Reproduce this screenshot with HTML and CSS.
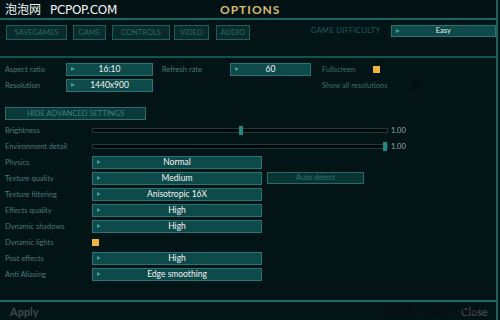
FILE: index.html
```html
<!DOCTYPE html>
<html lang="en">
<head>
    <meta charset="UTF-8">
    <title>Options</title>
    <link rel="stylesheet" href="styles.css">
</head>
<body>
    <div class="screen">
        <div class="topbar">
            <span class="brand">泡泡网<b>PCPOP.COM</b></span>
            <span class="title">OPTIONS</span>
        </div>
        <div class="tabs-row">
            <div class="tabs">
                <a class="tab">SAVEGAMES</a>
                <a class="tab tab-game">GAME</a>
                <a class="tab tab-controls">CONTROLS</a>
                <a class="tab tab-video">VIDEO</a>
                <a class="tab tab-audio">AUDIO</a>
            </div>
            <span class="diff-label">GAME DIFFICULTY</span>
            <div class="box diff-box"><i class="arrow"></i><span>Easy</span></div>
        </div>
        <div class="content">
            <div class="row">
                <span class="lbl lbl-first">Aspect ratio</span>
                <div class="box box-sm"><i class="arrow"></i><span>16:10</span></div>
                <span class="lbl lbl-refresh">Refresh rate</span>
                <div class="box box-rate"><i class="arrow"></i><span>60</span></div>
                <span class="lbl lbl-full">Fullscreen</span>
                <span class="check on"></span>
            </div>
            <div class="row">
                <span class="lbl lbl-first">Resolution</span>
                <div class="box box-sm"><i class="arrow"></i><span>1440x900</span></div>
                <span class="lbl lbl-show">Show all resolutions</span>
                <span class="check"></span>
            </div>
            <a class="hide-btn">HIDE ADVANCED SETTINGS</a>
            <div class="adv">
                <div class="arow">
                    <span class="lbl">Brightness</span>
                    <div class="slider"><span class="thumb" style="left:146px"></span></div>
                    <span class="val">1.00</span>
                </div>
                <div class="arow">
                    <span class="lbl">Environment detail</span>
                    <div class="slider"><span class="thumb" style="left:290px"></span></div>
                    <span class="val">1.00</span>
                </div>
                <div class="arow">
                    <span class="lbl">Physics</span>
                    <div class="box box-lg"><i class="arrow"></i><span>Normal</span></div>
                </div>
                <div class="arow">
                    <span class="lbl">Texture quality</span>
                    <div class="box box-lg"><i class="arrow"></i><span>Medium</span></div>
                    <a class="auto-btn">Auto detect</a>
                </div>
                <div class="arow">
                    <span class="lbl">Texture filtering</span>
                    <div class="box box-lg"><i class="arrow"></i><span>Anisotropic 16X</span></div>
                </div>
                <div class="arow">
                    <span class="lbl">Effects quality</span>
                    <div class="box box-lg"><i class="arrow"></i><span>High</span></div>
                </div>
                <div class="arow">
                    <span class="lbl">Dynamic shadows</span>
                    <div class="box box-lg"><i class="arrow"></i><span>High</span></div>
                </div>
                <div class="arow">
                    <span class="lbl">Dynamic lights</span>
                    <span class="check on check-lights"></span>
                </div>
                <div class="arow">
                    <span class="lbl">Post effects</span>
                    <div class="box box-lg"><i class="arrow"></i><span>High</span></div>
                </div>
                <div class="arow">
                    <span class="lbl">Anti Aliasing</span>
                    <div class="box box-lg"><i class="arrow"></i><span>Edge smoothing</span></div>
                </div>
            </div>
        </div>
        <div class="footer">
            <span class="foot-btn">Apply</span>
            <span class="foot-btn">Close</span>
            <span class="watermark">泡泡网 PCPOP.COM</span>
        </div>
    </div>
</body>
</html>
```

FILE: styles.css
```css
*{
    margin: 0;
    padding: 0;
    box-sizing: border-box;
}
body{
    width: 500px;
    height: 320px;
    background-color: #031417;
    font-family: Lato, "DejaVu Sans", sans-serif;
    overflow: hidden;
}
.screen{
    width: 498px;
    height: 320px;
    display: flex;
    flex-direction: column;
    border-right: 2px solid #1d5f5a;
}
.topbar{
    height: 20px;
    background-color: #021113;
    border-bottom: 2px solid #1c6662;
    position: relative;
    display: flex;
    align-items: center;
    padding-left: 5px;
}
.brand{
    color: #f4f4f4;
    font-family: "Noto Sans CJK SC", "DejaVu Sans", sans-serif;
    font-size: 12px;
    line-height: 14px;
}
.brand b{
    font-family: "DejaVu Sans", sans-serif;
    font-weight: normal;
    font-size: 12px;
    margin-left: 9px;
    letter-spacing: -0.3px;
}
.title{
    position: absolute;
    left: 220px;
    top: 2px;
    color: #d9bd72;
    font-size: 12px;
    font-weight: bold;
    letter-spacing: 1px;
}
.tabs-row{
    height: 38px;
    border-bottom: 2px solid #15524f;
    display: flex;
    align-items: flex-start;
    padding: 5px 0 0 6px;
}
.tabs{
    display: flex;
}
.tab{
    height: 15px;
    border: 1px solid #1e5e5a;
    background-color: #0a2a2b;
    color: #236b66;
    font-size: 7.5px;
    line-height: 13px;
    text-align: center;
    width: 61px;
    margin-right: 6px;
}
.tab-game{ width: 33px; }
.tab-controls{ width: 58px; margin-right: 4px; }
.tab-video{ width: 35px; margin-right: 7px; }
.tab-audio{ width: 34px; }
.diff-label{
    margin-left: 55px;
    margin-top: 1px;
    color: #1f5f5b;
    font-size: 7.5px;
    letter-spacing: 0.3px;
    width: 81px;
}
.box{
    position: relative;
    height: 13px;
    background-color: #0e4a4a;
    border: 1px solid #2a7370;
    color: #f2f2f2;
    font-size: 8.5px;
    line-height: 11px;
    text-align: center;
}
.arrow{
    position: absolute;
    left: 4px;
    top: 3px;
    width: 0;
    height: 0;
    border-left: 4px solid #3f9f98;
    border-top: 2.5px solid transparent;
    border-bottom: 2.5px solid transparent;
}
.diff-box{
    width: 107px;
    height: 12px;
    font-size: 7.5px;
    line-height: 10px;
}
.content{
    flex: 1;
    padding: 3px 0 0 5px;
}
.row{
    display: flex;
    align-items: center;
    height: 16px;
}
.lbl{
    color: #4d7a77;
    font-size: 7.5px;
}
.lbl-first{ width: 61px; }
.box-sm{ width: 87px; }
.lbl-refresh{ margin-left: 9px; width: 68px; }
.box-rate{ width: 81px; }
.lbl-full{ margin-left: 11px; width: 51px; color: #3f6e6b; }
.lbl-show{ margin-left: 169px; width: 90px; color: #3f6e6b; }
.check{
    width: 7px;
    height: 7px;
    background-color: #050c10;
}
.check.on{
    background-color: #f0b43c;
}
.hide-btn{
    display: block;
    width: 141px;
    height: 13px;
    margin-top: 14px;
    border: 1px solid #2a6f6c;
    background-color: #0b3839;
    color: #3a8580;
    font-size: 7.5px;
    line-height: 11px;
    text-align: center;
}
.adv{
    margin-top: 2px;
}
.arow{
    display: flex;
    align-items: center;
    height: 16px;
}
.arow .lbl{
    width: 87px;
}
.slider{
    position: relative;
    width: 296px;
    height: 5px;
    border: 1px solid #1b3c3c;
    background-color: #020607;
}
.thumb{
    position: absolute;
    top: -3px;
    width: 4px;
    height: 9px;
    background-color: #1f8a82;
}
.val{
    margin-left: 3px;
    color: #8fb0ad;
    font-size: 7.5px;
}
.box-lg{
    width: 170px;
}
.auto-btn{
    margin-left: 5px;
    width: 97px;
    height: 12px;
    border: 1px solid #2a6a66;
    background-color: #0a3334;
    color: #2e7772;
    font-size: 7.5px;
    line-height: 10px;
    text-align: center;
}
.footer{
    position: relative;
    height: 20px;
    border-top: 2px solid #1e6a62;
    display: flex;
    justify-content: space-between;
    align-items: center;
    padding: 0 8px 0 10px;
}
.foot-btn{
    color: #3b4a4a;
    font-size: 11px;
    font-weight: bold;
}
.watermark{
    position: absolute;
    left: 382px;
    top: 0;
    color: #0b0b0b;
    font-family: "Noto Sans CJK SC", "DejaVu Sans", sans-serif;
    font-size: 11px;
}
```
